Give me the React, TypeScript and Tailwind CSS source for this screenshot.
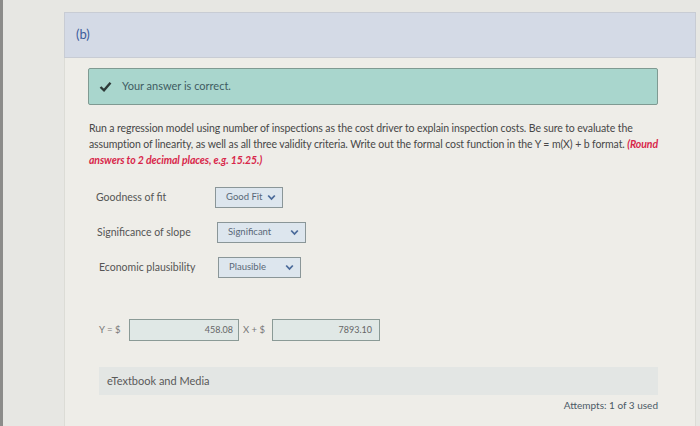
import React from "react";

const Select = ({ value, width }: { value: string; width: string }) => (
  <div
    className={`flex h-[21px] shrink-0 items-center justify-between gap-[5px] whitespace-nowrap border border-[#8a9698] bg-[#dde6ee] pl-[10px] pr-[6px] text-[9.5px] text-[#5a6878] ${width}`}
  >
    <span>{value}</span>
    <svg width="9" height="7" viewBox="0 0 9 7" fill="none" className="shrink-0">
      <path d="M1.2 1.5 L4.5 5 L7.8 1.5" stroke="#4a6a9a" strokeWidth="1.8" />
    </svg>
  </div>
);

export default function App() {
  return (
    <div
      className="flex h-[426px] w-[700px] overflow-hidden bg-[#e7e7e3] text-[#4a4a4a]"
      style={{ fontFamily: "Lato, 'Noto Sans', sans-serif" }}
    >
      <div className="w-[3px] bg-[#8c8c8a]" />
      <div className="ml-[61px] mt-[12px] flex w-[632px] flex-col">
        <div className="flex h-[46px] items-center border border-[#c8ccd4] bg-[#d4dae6] pl-[11px] text-[13px] text-[#3c5c9c]">
          (b)
        </div>
        <div className="flex flex-1 flex-col border-l border-r border-[#dcdcd6] bg-[#eeede8] pl-[23px] pr-[37px]">
          <div className="mt-[10px] flex h-[37px] items-center rounded-[2px] border border-[#7f9a92] bg-[#a9d6cd] pl-[10px] text-[11px] text-[#3f5c62]">
            <svg width="13" height="11" viewBox="0 0 13 11" className="mr-[10px]">
              <path d="M1.5 6 L5 9.3 L11.5 1.8" stroke="#2e3a38" strokeWidth="2.4" fill="none" />
            </svg>
            Your answer is correct.
          </div>

          <p className="mt-[15px] pl-[1px] text-[10.5px] leading-[16px] tracking-[-0.1px] text-[#474747]">
            Run a regression model using number of inspections as the cost driver to explain inspection costs. Be sure to evaluate the
            assumption of linearity, as well as all three validity criteria. Write out the formal cost function in the Y = m(X) + b format.{" "}
            <span className="font-bold italic text-[#d8274a]">
              (Round answers to 2 decimal places, e.g. 15.25.)
            </span>
          </p>

          <div className="mt-[19px] flex flex-col gap-[14px] pl-[8px] text-[10.5px] text-[#555]">
            <div className="flex items-center">
              <span className="w-[119px] shrink-0">Goodness of fit</span>
              <Select value="Good Fit" width="w-[68px]" />
            </div>
            <div className="flex items-center pl-[1px]">
              <span className="w-[120px] shrink-0">Significance of slope</span>
              <Select value="Significant" width="w-[89px]" />
            </div>
            <div className="flex items-center pl-[3px]">
              <span className="w-[119px] shrink-0">Economic plausibility</span>
              <Select value="Plausible" width="w-[83px]" />
            </div>
          </div>

          <div className="mt-[41px] flex items-center pl-[11px] text-[9.5px] text-[#777]">
            <span className="w-[30px]">Y = $</span>
            <div className="flex h-[22px] w-[110px] items-center justify-end border border-[#8a9a96] bg-[#e0e8e6] pr-[5px] text-[9px] text-[#666]">
              458.08
            </div>
            <span className="ml-[4px] w-[29px]">X + $</span>
            <div className="flex h-[22px] w-[108px] items-center justify-end border border-[#8a9a96] bg-[#e0e8e6] pr-[7px] text-[9px] text-[#666]">
              7893.10
            </div>
          </div>

          <div className="mt-[26px] ml-[11px] flex h-[28px] items-center bg-[#e3e6e4] pl-[8px] text-[11px] text-[#5a5a5a]">
            eTextbook and Media
          </div>

          <div className="mt-[3px] text-right text-[10px] text-[#4a5a66]">Attempts: 1 of 3 used</div>
        </div>
      </div>
    </div>
  );
}
